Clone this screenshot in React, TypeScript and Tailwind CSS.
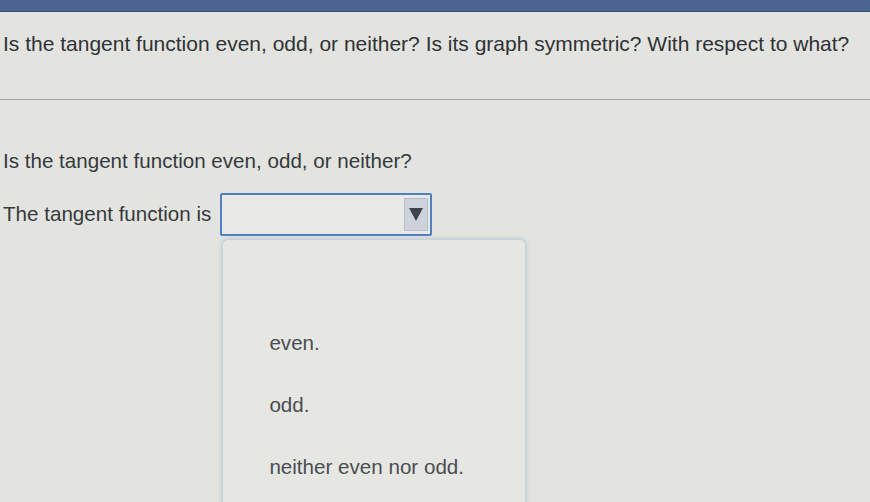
import React from "react";

export default function App() {
  return (
    <div
      className="w-[870px] h-[502px] overflow-hidden bg-[#e3e4df] text-[#2e3236] flex flex-col"
      style={{ fontFamily: '"Liberation Sans", Arial, sans-serif' }}
    >
      <div className="shrink-0 h-[12px] bg-[#4a6591] border-b border-[#3a4f70]" />
      <div className="shrink-0 h-[88px] pl-[3px] pt-[19px] text-[21px] leading-[26px] border-b border-[#9ea3a6] whitespace-nowrap">
        Is the tangent function even, odd, or neither? Is its graph symmetric? With respect to what?
      </div>
      <div className="shrink-0 pl-[3px] pt-[48px] text-[20.6px] leading-[26px] text-[#36393d]">
        Is the tangent function even, odd, or neither?
      </div>
      <div className="shrink-0 flex items-start pt-[19px]">
        <div className="pl-[3px] pt-[8px] pr-[9px] text-[20.6px] leading-[26px] text-[#36393d] whitespace-nowrap">
          The tangent function is
        </div>
        <div className="flex flex-col">
          <div className="w-[212px] h-[43px] border-2 border-[#4f80c2] rounded-[2px] bg-[#e8e9e5] flex items-center justify-end pr-[2px]">
            <div className="w-[24px] h-[33px] bg-[#cdd3da] border border-[#b5bec9] flex items-start justify-center pt-[9px]">
              <svg width="14" height="13" viewBox="0 0 14 13">
                <polygon points="0,0 14,0 7,13" fill="#3f4247" />
              </svg>
            </div>
          </div>
          <div className="ml-[2px] mt-[3px] w-[304px] h-[290px] border border-[#c9d2dc] rounded-[6px] bg-[#e6e7e3] shadow-[0_0_4px_rgba(110,150,200,0.45)] pl-[46px] pt-[90px] text-[20.6px] leading-[26px] text-[#4a4d52] flex flex-col gap-[36px]">
            <div>even.</div>
            <div>odd.</div>
            <div>neither even nor odd.</div>
          </div>
        </div>
      </div>
    </div>
  );
}
